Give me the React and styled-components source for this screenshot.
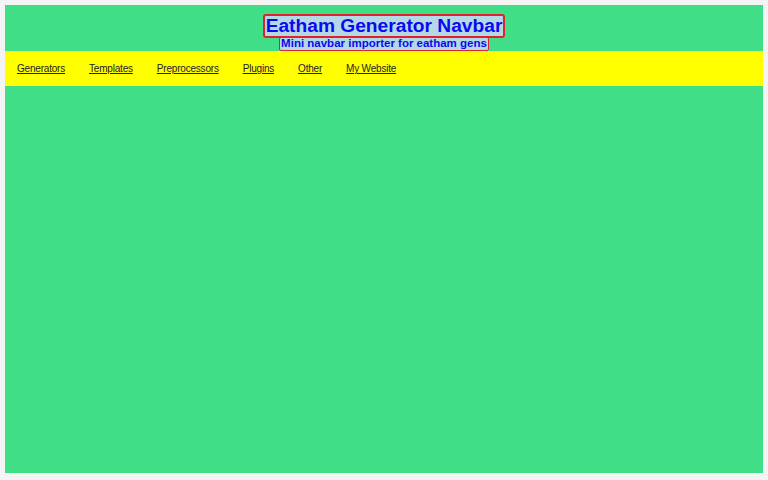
import React from "react";
import styled, { createGlobalStyle } from "styled-components";

const Global = createGlobalStyle`
  html, body { margin: 0; padding: 0; background: #f4f4f4; }
  body { padding: 5px; font-family: "Liberation Sans", Arial, sans-serif; }
`;

const Page = styled.div`
  width: 758px;
  height: 468px;
  background: #40de86;
  display: flex;
  flex-direction: column;
`;

const Header = styled.header`
  display: flex;
  flex-direction: column;
  align-items: center;
  padding-top: 9px;
`;

const Title = styled.h1`
  margin: 0;
  box-sizing: border-box;
  font-size: 19.2px;
  line-height: 20px;
  white-space: nowrap;
  font-weight: bold;
  color: #0a0af0;
  background: #b4d8e6;
  border: 2px solid #e0202a;
  border-radius: 3px;
  padding: 0 1px;
  height: 24px;
  text-align: center;
`;

const Subtitle = styled.h2`
  margin: -1px 0 0 0;
  box-sizing: border-box;
  font-size: 11.5px;
  line-height: 11px;
  white-space: nowrap;
  font-weight: bold;
  color: #0a0af0;
  background: #b4d8e6;
  border: 1.5px solid #e0202a;
  border-radius: 2px;
  padding: 0 1px;
  height: 14px;
  text-align: center;
`;

const Nav = styled.nav`
  height: 35px;
  background: #ffff00;
  display: flex;
  align-items: center;
  padding-left: 12px;
  gap: 24px;
`;

const NavLink = styled.a`
  font-size: 10px;
  letter-spacing: -0.2px;
  color: #222;
  text-decoration: underline;
`;

const links = ["Generators", "Templates", "Preprocessors", "Plugins", "Other", "My Website"];

export default function App() {
  return (
    <>
      <Global />
      <Page>
        <Header>
          <Title>Eatham Generator Navbar</Title>
          <Subtitle>Mini navbar importer for eatham gens</Subtitle>
        </Header>
        <Nav>
          {links.map((l) => (
            <NavLink key={l} href="#">{l}</NavLink>
          ))}
        </Nav>
      </Page>
    </>
  );
}
